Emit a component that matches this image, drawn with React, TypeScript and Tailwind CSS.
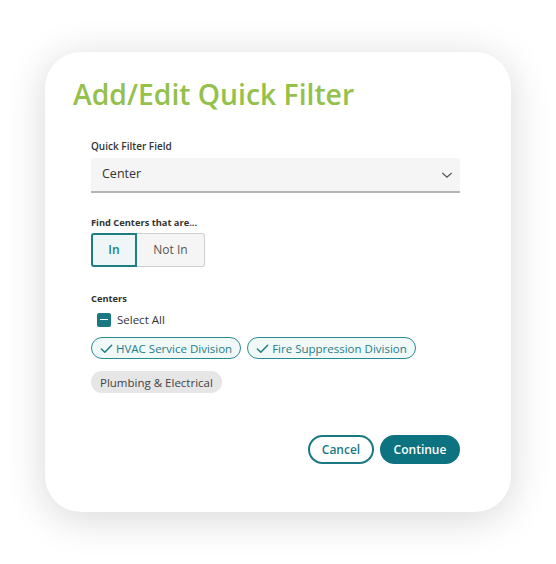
import { useState } from "react";

const CENTERS = [
  { name: "HVAC Service Division", on: true },
  { name: "Fire Suppression Division", on: true },
  { name: "Plumbing & Electrical", on: false },
];

function Check() {
  return (
    <svg viewBox="0 0 16 16" className="w-[15px] h-[15px]" fill="none" stroke="currentColor" strokeWidth="1.6" strokeLinecap="round" strokeLinejoin="round">
      <path d="M2.5 8.5 L6.2 12 L13.5 4.5" />
    </svg>
  );
}

export default function App() {
  const [mode, setMode] = useState<"in" | "out">("in");
  return (
    <div className="w-[556px] h-[564px] bg-white pt-[52px] pl-[45px] font-['Open_Sans',sans-serif]">
      <div className="w-[466px] h-[460px] bg-white rounded-[36px] shadow-[0_6px_40px_rgba(0,0,0,0.16)] pt-[22px]">
        <h1 className="ml-[28px] text-[28.3px] leading-[40px] font-semibold text-[#94c04c]">
          Add/Edit Quick Filter
        </h1>

        <div className="ml-[46px] w-[369px] mt-[24px]">
          <label className="block text-[10px] leading-[16px] font-semibold text-[#333]">Quick Filter Field</label>
          <div className="mt-[4px] h-[35px] bg-[#f5f5f5] border-b-2 border-[#b4b4b4] rounded-t-[3px] flex items-center justify-between pl-[11px] pr-[6px]">
            <span className="text-[12.5px] text-[#333]">Center</span>
            <svg viewBox="0 0 16 16" className="w-[14px] h-[14px] text-[#555]" fill="none" stroke="currentColor" strokeWidth="1.3" strokeLinecap="round">
              <path d="M3 6 L8 10.5 L13 6" />
            </svg>
          </div>

          <p className="mt-[23px] text-[9.3px] leading-[14px] font-bold text-[#333]">Find Centers that are...</p>
          <div className="mt-[3px] flex">
            <button
              onClick={() => setMode("in")}
              className={`w-[46px] h-[34px] text-[12px] rounded-l-[3px] ${
                mode === "in"
                  ? "border-2 border-[#1f7d86] bg-[#eef6f7] text-[#1f7d86] font-semibold"
                  : "border border-[#cfcfcf] bg-[#f5f5f5] text-[#555]"
              }`}
            >
              In
            </button>
            <button
              onClick={() => setMode("out")}
              className={`w-[68px] h-[34px] text-[12px] rounded-r-[3px] ${
                mode === "out"
                  ? "border-2 border-[#1f7d86] bg-[#eef6f7] text-[#1f7d86] font-semibold"
                  : "border border-l-0 border-[#cfcfcf] bg-[#f5f5f5] text-[#555]"
              }`}
            >
              Not In
            </button>
          </div>

          <p className="mt-[25px] text-[9.3px] leading-[14px] font-bold text-[#333]">Centers</p>
          <div className="mt-[5px] ml-[6px] flex items-center gap-[6px]">
            <span className="w-[14px] h-[14px] rounded-[2px] bg-[#1a7883] flex items-center justify-center">
              <span className="w-[8px] h-[1.5px] bg-white" />
            </span>
            <span className="text-[11.5px] text-[#333]">Select All</span>
          </div>

          <div className="mt-[9px] flex flex-wrap gap-x-[6px] gap-y-[12px] w-[340px]">
            {CENTERS.map((c) =>
              c.on ? (
                <span
                  key={c.name}
                  className="h-[22px] pl-[7px] pr-[8px] rounded-full border border-[#2a8a93] bg-[#f1f8f8] text-[#1f7d86] text-[11.5px] flex items-center gap-[2px]"
                >
                  <Check />
                  {c.name}
                </span>
              ) : (
                <span
                  key={c.name}
                  className="h-[22px] px-[9px] rounded-full bg-[#e6e6e6] text-[#444] text-[11.5px] flex items-center"
                >
                  {c.name}
                </span>
              )
            )}
          </div>

          <div className="mt-[42px] flex justify-end gap-[6px]">
            <button className="w-[66px] h-[29px] rounded-full border-2 border-[#1a7883] text-[#1a7883] text-[12px] font-semibold">
              Cancel
            </button>
            <button className="w-[80px] h-[29px] rounded-full bg-[#0e7380] text-white text-[12px] font-semibold">
              Continue
            </button>
          </div>
        </div>
      </div>
    </div>
  );
}
